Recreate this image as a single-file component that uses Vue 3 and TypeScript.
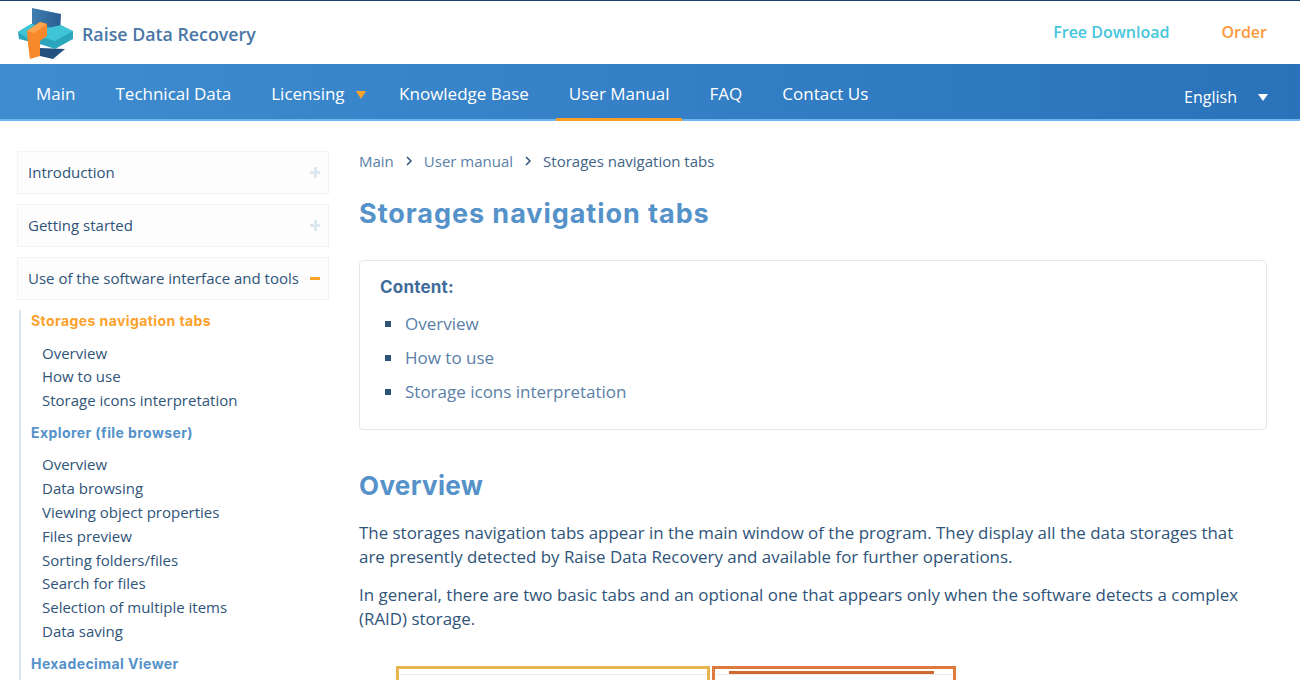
<script setup lang="ts">
interface NavItem {
  label: string;
  active?: boolean;
  caret?: boolean;
}

interface ManualGroup {
  title: string;
  current?: boolean;
  links: string[];
}

const navItems: NavItem[] = [
  { label: "Main" },
  { label: "Technical Data" },
  { label: "Licensing", caret: true },
  { label: "Knowledge Base" },
  { label: "User Manual", active: true },
  { label: "FAQ" },
  { label: "Contact Us" },
];

const groups: ManualGroup[] = [
  {
    title: "Storages navigation tabs",
    current: true,
    links: ["Overview", "How to use", "Storage icons interpretation"],
  },
  {
    title: "Explorer (file browser)",
    links: [
      "Overview",
      "Data browsing",
      "Viewing object properties",
      "Files preview",
      "Sorting folders/files",
      "Search for files",
      "Selection of multiple items",
      "Data saving",
    ],
  },
  { title: "Hexadecimal Viewer", links: [] },
];

const contents = ["Overview", "How to use", "Storage icons interpretation"];
</script>

<template>
  <div class="page">
    <header class="top">
      <a class="brand">
        <svg class="logo" width="58" height="54" viewBox="0 0 58 54">
          <defs>
            <linearGradient id="panel" x1="0" y1="0" x2="1" y2="0">
              <stop offset="0" stop-color="#3f7fb0" />
              <stop offset="1" stop-color="#2a5c92" />
            </linearGradient>
          </defs>
          <path d="M14 1 L43 7 L42 28 L14 26 Z" fill="url(#panel)" />
          <path d="M22 41 L47 42 L35 52 L22 49 Z" fill="#24507f" />
          <path d="M0 25 L13 17 L55 24 L55 32 L37 42 L25 38 L1 32 Z" fill="#2aa5bb" />
          <path d="M0 25 L13 17 L30 21 L43 18 L55 24 L37 34 L24 30 L12 33 Z" fill="#3fc4d6" />
          <path d="M9 24 L22 15 L29 17 L29 29 L22 34 L22 49 L12 52 L10 37 Z" fill="#f8892a" />
          <path d="M9 24 L22 15 L29 17 L16 26 Z" fill="#fca450" />
        </svg>
        <span class="brand-name">Raise Data Recovery</span>
      </a>
      <div class="top-links">
        <a class="dl">Free Download</a>
        <a class="order">Order</a>
      </div>
    </header>

    <nav class="nav">
      <ul class="nav-list">
        <li v-for="item in navItems" :key="item.label" class="nav-item" :class="{ on: item.active }">
          {{ item.label }}<i v-if="item.caret" class="caret"></i>
        </li>
      </ul>
      <div class="lang">English<i class="lang-caret"></i></div>
    </nav>

    <div class="body">
      <aside class="side">
        <div class="acc"><span>Introduction</span><span class="plus"></span></div>
        <div class="acc"><span>Getting started</span><span class="plus"></span></div>
        <div class="acc"><span>Use of the software interface and tools</span><span class="minus"></span></div>
        <div class="tree">
          <div v-for="g in groups" :key="g.title" class="group">
            <div class="group-title" :class="{ current: g.current }">{{ g.title }}</div>
            <a v-for="l in g.links" :key="l" class="tree-link">{{ l }}</a>
          </div>
        </div>
      </aside>

      <main class="main">
        <div class="crumbs">
          <a>Main</a>
          <svg class="chev" width="8" height="10" viewBox="0 0 8 10"><path d="M2 1 L6 5 L2 9" fill="none" stroke="#2f5479" stroke-width="1.5" /></svg>
          <a>User manual</a>
          <svg class="chev" width="8" height="10" viewBox="0 0 8 10"><path d="M2 1 L6 5 L2 9" fill="none" stroke="#2f5479" stroke-width="1.5" /></svg>
          <span>Storages navigation tabs</span>
        </div>
        <h1>Storages navigation tabs</h1>
        <section class="toc">
          <div class="toc-title">Content:</div>
          <ul>
            <li v-for="c in contents" :key="c">{{ c }}</li>
          </ul>
        </section>
        <h2>Overview</h2>
        <p>The storages navigation tabs appear in the main window of the program. They display all the data storages that are presently detected by Raise Data Recovery and available for further operations.</p>
        <p>In general, there are two basic tabs and an optional one that appears only when the software detects a complex (RAID) storage.</p>
        <div class="shot">
          <div class="tab-yellow"><div class="rule"></div></div>
          <div class="tab-orange"><div class="rule"></div><div class="bar"></div></div>
        </div>
      </main>
    </div>
  </div>
</template>

<style>
html,
body {
  margin: 0;
  background: #fff;
  overflow: hidden;
}
</style>

<style scoped>
.page {
  height: 680px;
  overflow: hidden;
  font-family: "Open Sans", sans-serif;
  color: #2f5479;
  font-size: 15px;
}

.top {
  height: 63px;
  border-top: 1px solid #1c3f6b;
  display: flex;
  justify-content: space-between;
  padding: 0 33px 0 18px;
}

.brand {
  display: flex;
  align-items: center;
}

.logo {
  margin-top: 3px;
}

.brand-name {
  margin-left: 6px;
  margin-top: 2px;
  font-size: 17.8px;
  font-weight: 600;
  color: #4a77a6;
}

.top-links {
  display: flex;
  gap: 52px;
  padding-top: 20px;
  font-size: 16px;
  font-weight: 600;
}

.dl {
  color: #45c6dc;
}

.order {
  color: #fb9a3c;
}

.nav {
  height: 55px;
  background: linear-gradient(90deg, #3f8cd0, #2a73bb);
  border-bottom: 2px solid #6fb4ee;
  display: flex;
  justify-content: space-between;
  color: #fff;
  padding-left: 16px;
  padding-right: 32px;
}

.nav-list {
  display: flex;
  list-style: none;
  margin: 0;
  padding: 0;
}

.nav-item {
  padding: 18px 20px 0;
  font-size: 17px;
  line-height: 23px;
  position: relative;
}

.nav-item.on::after {
  content: "";
  position: absolute;
  left: 7px;
  right: 8px;
  bottom: -2px;
  height: 3px;
  background: #f9a024;
}

.caret {
  display: inline-block;
  width: 0;
  height: 0;
  margin-left: 11px;
  margin-right: -6.5px;
  margin-bottom: 1px;
  border-left: 5.5px solid transparent;
  border-right: 5.5px solid transparent;
  border-top: 8px solid #fba22c;
}

.lang {
  font-size: 16px;
  padding-top: 22px;
  line-height: 23px;
}

.lang-caret {
  display: inline-block;
  width: 0;
  height: 0;
  margin-left: 21px;
  margin-bottom: 2px;
  border-left: 5px solid transparent;
  border-right: 5px solid transparent;
  border-top: 7px solid #fff;
}

.body {
  display: flex;
  padding: 30px 33px 0 17px;
}

.side {
  width: 312px;
  flex: none;
  margin-right: 30px;
}

.acc {
  height: 39px;
  border: 1px solid #f1f4f7;
  background: #fdfdfe;
  margin-bottom: 10px;
  display: flex;
  align-items: center;
  justify-content: space-between;
  padding: 0 8px 2px 10px;
  font-size: 15px;
}

.plus,
.minus {
  position: relative;
  width: 10px;
  height: 10px;
  flex: none;
}

.plus::before,
.minus::before {
  content: "";
  position: absolute;
  left: 0;
  right: 0;
  top: 4px;
  height: 3px;
  background: #dbe8f0;
}

.plus::after {
  content: "";
  position: absolute;
  top: 0;
  height: 11px;
  left: 4px;
  width: 3px;
  background: #dbe8f0;
}

.minus::before {
  background: #fba22c;
}

.tree {
  margin-left: 2px;
  border-left: 2px solid #dfe7ee;
  padding-left: 10px;
  padding-top: 1px;
}

.group {
  display: flex;
  flex-direction: column;
  padding-bottom: 10px;
}

.group-title {
  font-family: "Inter", sans-serif;
  font-weight: 700;
  font-size: 14px;
  letter-spacing: 0.42px;
  line-height: 20px;
  color: #5592c9;
  margin-bottom: 10.5px;
}

.group-title.current {
  color: #fba22c;
}

.tree-link {
  line-height: 23.8px;
  font-size: 15px;
  padding-left: 11px;
}

.main {
  flex: 1;
  min-width: 0;
}

.crumbs {
  display: flex;
  align-items: center;
  font-size: 15px;
  line-height: 22px;
  margin-top: -1px;
  color: #5e7f9f;
}

.crumbs a {
  color: #5a80a8;
}

.crumbs span {
  color: #3f6486;
}

.chev {
  margin: 0 11px;
}

h1 {
  margin: 23px 0 0;
  font-family: "Inter", sans-serif;
  font-size: 27px;
  letter-spacing: 0.95px;
  line-height: 38px;
  font-weight: 700;
  color: #5592c9;
}

.toc {
  margin-top: 27px;
  height: 170px;
  box-sizing: border-box;
  border: 1px solid #e8e8e8;
  border-radius: 4px;
  padding: 15px 20px;
}

.toc-title {
  font-family: "Inter", sans-serif;
  font-weight: 700;
  font-size: 17px;
  letter-spacing: 0.2px;
  line-height: 22px;
  color: #3f6c9b;
}

.toc ul {
  list-style: none;
  margin: 9px 0 0;
  padding: 0 0 0 5px;
}

.toc li {
  position: relative;
  line-height: 34px;
  font-size: 17px;
  color: #5a80a8;
  padding-left: 20px;
}

.toc li::before {
  content: "";
  position: absolute;
  left: 0;
  top: 14px;
  width: 6px;
  height: 6px;
  background: #2f5479;
}

h2 {
  margin: 37px 0 0;
  font-family: "Inter", sans-serif;
  font-size: 26px;
  letter-spacing: 0.35px;
  line-height: 38px;
  font-weight: 700;
  color: #5592c9;
}

p {
  margin: 16px 0 0;
  padding-right: 10px;
  font-size: 16.92px;
  line-height: 24px;
}

p + p {
  margin-top: 14px;
}

.shot {
  margin: 35px 0 0 37px;
  display: flex;
  gap: 2px;
}

.tab-yellow,
.tab-orange {
  height: 60px;
  box-sizing: border-box;
  border: 3px solid #e8b44e;
  border-bottom: none;
  position: relative;
  width: 314px;
}

.tab-orange {
  border-color: #dd7a40;
  width: 244px;
}

.rule {
  margin-top: 5px;
  height: 1px;
  background: #eaeaea;
}

.bar {
  position: absolute;
  left: 14px;
  right: 19px;
  top: 2px;
  height: 3px;
  background: #d2692c;
}
</style>
